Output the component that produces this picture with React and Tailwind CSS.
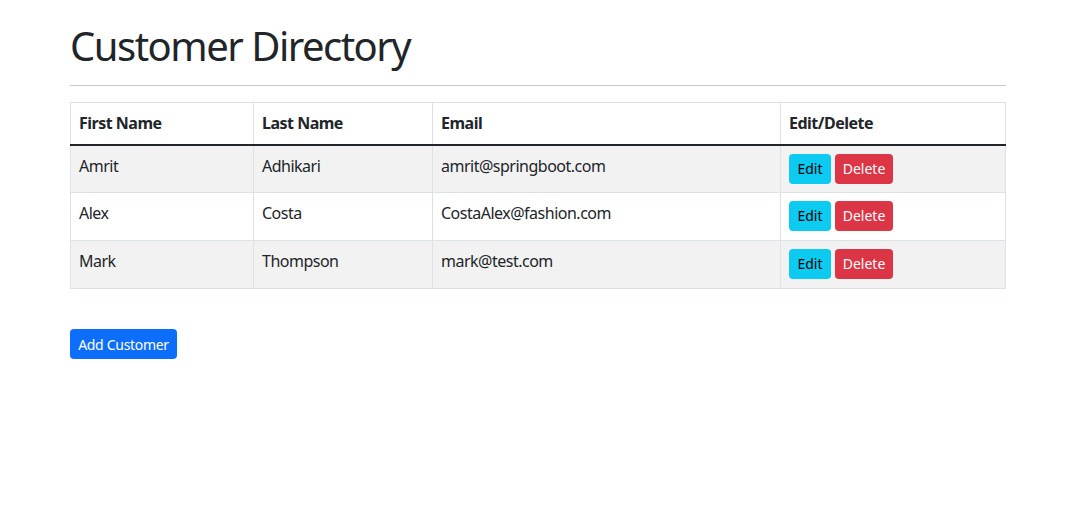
const customers = [
  { first: 'Amrit', last: 'Adhikari', email: 'amrit@springboot.com' },
  { first: 'Alex', last: 'Costa', email: 'CostaAlex@fashion.com' },
  { first: 'Mark', last: 'Thompson', email: 'mark@test.com' },
];

const th = 'border border-[#dee2e6] border-b-2 border-b-[#212529] px-2 py-2 text-left align-top font-bold';
const td = 'border border-[#dee2e6] px-2 py-2 align-top';

export default function App() {
  return (
    <div className="min-h-screen bg-white text-[#212529] font-['Noto_Sans',sans-serif]">
      <div className="w-[936px] ml-[70px] pt-[22px]">
        <h1 className="text-[40px] leading-[48px] font-normal tracking-[-1.5px]">Customer Directory</h1>
        <hr className="mt-[15px] mb-[16px] border-t border-[#c8c9ca]" />

        <table className="w-full border-collapse table-fixed text-[16px] leading-6 tracking-[-0.5px]">
          <colgroup>
            <col className="w-[183px]" />
            <col className="w-[179px]" />
            <col className="w-[348px]" />
            <col />
          </colgroup>
          <thead>
            <tr className="h-[42px]">
              <th className={th}>First Name</th>
              <th className={th}>Last Name</th>
              <th className={th}>Email</th>
              <th className={th}>Edit/Delete</th>
            </tr>
          </thead>
          <tbody>
            {customers.map((c, i) => (
              <tr key={c.email} className={i % 2 === 0 ? 'bg-[#f2f2f2] h-[48px]' : 'bg-white h-[48px]'}>
                <td className={td}>{c.first}</td>
                <td className={td}>{c.last}</td>
                <td className={td}>{c.email}</td>
                <td className={td}>
                  <div className="flex gap-1">
                    <button className="h-[30px] w-[42px] rounded bg-[#0dcaf0] text-black text-[14px] tracking-normal">Edit</button>
                    <button className="h-[30px] w-[58px] rounded bg-[#dc3545] text-white text-[14px] tracking-normal">Delete</button>
                  </div>
                </td>
              </tr>
            ))}
          </tbody>
        </table>

        <button className="mt-[40px] h-[30px] w-[107px] rounded bg-[#0d6efd] text-white text-[14px] tracking-[-0.3px]">Add Customer</button>
      </div>
    </div>
  );
}
